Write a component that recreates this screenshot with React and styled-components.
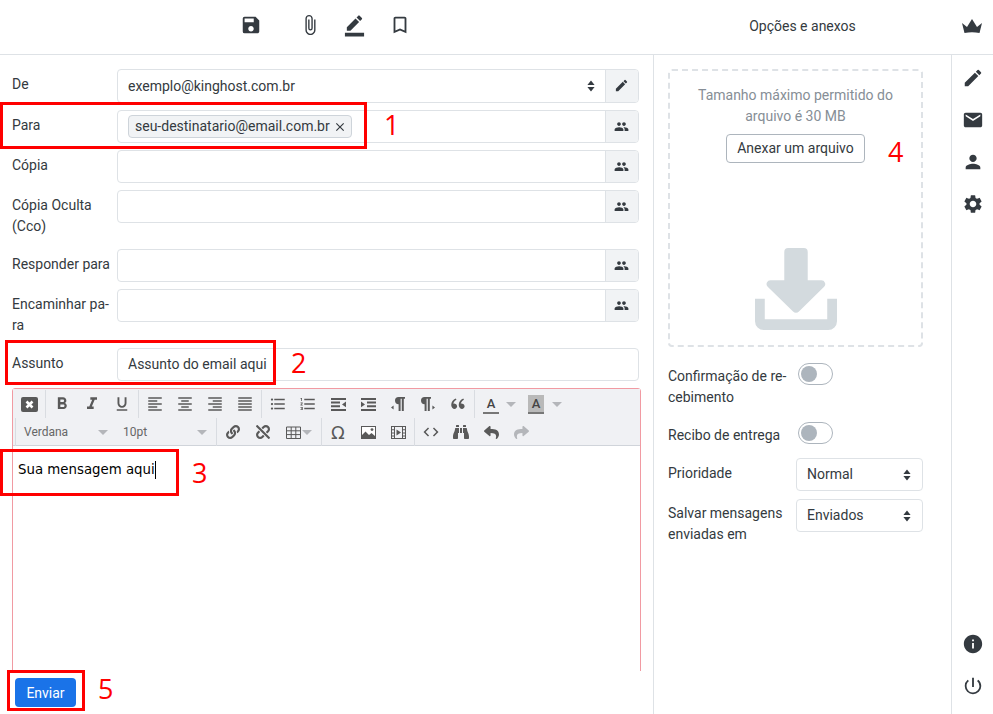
import React from 'react';
import styled, { createGlobalStyle } from 'styled-components';
import { FaBinoculars, FaLink, FaUnlink, FaReply, FaShare } from 'react-icons/fa';
import { RiDoubleQuotesL } from 'react-icons/ri';
import {
    MdSave, MdAttachFile, MdBorderColor, MdBookmarkBorder, MdCreate, MdEmail, MdPerson,
    MdSettings, MdInfo, MdPowerSettingsNew, MdPeople, MdFormatBold, MdFormatItalic,
    MdFormatUnderlined, MdFormatAlignLeft, MdFormatAlignCenter, MdFormatAlignRight,
    MdFormatAlignJustify, MdFormatListBulleted, MdFormatListNumbered, MdCode, MdClose,
} from 'react-icons/md';

const GlobalStyle = createGlobalStyle`
    html, body {
        margin: 0;
        padding: 0;
        background: #fff;
    }
    * {
        box-sizing: border-box;
    }
`;

const Page = styled.div`
    position: relative;
    width: 993px;
    height: 714px;
    overflow: hidden;
    display: flex;
    flex-direction: column;
    font-family: Roboto, "Liberation Sans", sans-serif;
    font-size: 14px;
    line-height: 21px;
    color: #343a40;
`;

const Header = styled.header`
    height: 55px;
    flex: none;
    display: flex;
    border-bottom: 1px solid #dee2e6;
`;

const HeaderTools = styled.div`
    width: 654px;
    padding: 0 0 4px 239px;
    display: flex;
    align-items: center;
    gap: 22px;
    font-size: 22px;
    svg {
        display: block;
    }
`;

const HeaderTool = styled.span`
    width: 23px;
    display: flex;
    justify-content: center;
    margin-left: ${(p) => p.$shift || 0}px;
    font-size: ${(p) => p.$size || 22}px;
`;

const HeaderTitle = styled.div`
    width: 297px;
    text-align: center;
    line-height: 53px;
`;

const HeaderCrown = styled.div`
    width: 42px;
    padding-bottom: 2px;
    display: flex;
    align-items: center;
    justify-content: center;
`;

const Body = styled.div`
    flex: 1;
    min-height: 0;
    display: flex;
`;

const Main = styled.main`
    width: 654px;
    flex: none;
    display: flex;
    flex-direction: column;
    border-right: 1px solid #dee2e6;
`;

const FormScroll = styled.div`
    height: 617px;
    overflow: hidden;
    padding: 14px 14px 0 12px;
`;

const Row = styled.div`
    display: flex;
    margin-bottom: 7px;
`;

const Label = styled.label`
    width: 105px;
    flex: none;
    padding: 5px 0;
    white-space: pre-line;
`;

const InputGroup = styled.div`
    flex: 1;
    height: ${(p) => (p.$tall ? 34 : 33)}px;
    display: flex;
    border: 1px solid #dee2e6;
    border-radius: 4px;
    background: #fff;
`;

const InputValue = styled.div`
    flex: 1;
    padding: 0 10px;
    display: flex;
    align-items: center;
    justify-content: space-between;
    white-space: nowrap;
`;

const Addon = styled.span`
    width: 33px;
    flex: none;
    padding: 0 1px 1px 0;
    display: flex;
    align-items: center;
    justify-content: center;
    background: #f1f3f5;
    border-left: 1px solid #dee2e6;
    border-radius: 0 3px 3px 0;
    font-size: 15px;
`;

const Chip = styled.span`
    height: 23px;
    display: inline-flex;
    align-items: center;
    gap: 3px;
    padding: 0 4px 0 6px;
    background: #f1f3f5;
    border: 1px solid #ced4da;
    border-radius: 4px;
    svg {
        font-size: 14px;
    }
`;

const Editor = styled.div`
    margin-right: -2px;
    height: 300px;
    border: 1px solid #f19aa2;
    border-radius: 3px 3px 0 0;
`;

const EditorToolbar = styled.div`
    height: 57px;
    padding-top: 1px;
    background: #f0f1f4;
    border-bottom: 1px solid #d0d4da;
`;

const ToolbarRow = styled.div`
    height: 28px;
    display: flex;
    align-items: center;
    padding-left: ${(p) => p.$indent || 0}px;
`;

const ToolGroup = styled.div`
    height: 28px;
    display: flex;
    align-items: center;
    padding: 0 1px;
    border-right: ${(p) => (p.$last ? '0' : '1px solid #d9dce1')};
    border-left: ${(p) => (p.$lead ? '1px solid #d9dce1' : '0')};
`;

const Tool = styled.span`
    width: ${(p) => p.$w || 30}px;
    height: 24px;
    display: flex;
    align-items: center;
    justify-content: center;
    color: ${(p) => (p.$muted ? '#b4b6ba' : '#595959')};
    font-size: ${(p) => p.$size || 18}px;
`;

const Caret = styled.span`
    width: 0;
    height: 0;
    margin-right: ${(p) => p.$nudge || 0}px;
    border-left: 5px solid transparent;
    border-right: 5px solid transparent;
    border-top: 5px solid #b4b6ba;
`;

const ColorLetter = styled.span`
    width: 16px;
    height: 19px;
    display: flex;
    justify-content: center;
    background: ${(p) => (p.$marked ? '#b9b9b9' : 'transparent')};
    border-bottom: 2px solid #777;
    font-size: 13px;
    line-height: 18px;
    font-weight: 500;
    color: #444;
`;

const FontPicker = styled.span`
    width: ${(p) => p.$w}px;
    height: 24px;
    padding: 0 8px 0 7px;
    display: flex;
    align-items: center;
    justify-content: space-between;
    font-size: 12px;
    color: #666;
`;

const OmegaGlyph = styled.span`
    font-family: "DejaVu Sans", sans-serif;
    font-size: 18px;
    color: #595959;
`;

const EditorBody = styled.div`
    padding: 14px 5px;
    display: flex;
    align-items: center;
    font-family: "DejaVu Sans", Verdana, sans-serif;
    font-size: 13.33px;
    line-height: 20px;
    color: #000;
`;

const TextCursor = styled.span`
    width: 1px;
    height: 18px;
    background: #000;
`;

const Footer = styled.div`
    flex: 1;
    padding: 7px 15px;
`;

const SendButton = styled.button`
    width: 61px;
    height: 29px;
    padding: 1px 0 0;
    background: #1a73e8;
    color: #fff;
    border: 0;
    border-radius: 4px;
    font: inherit;
`;

const Options = styled.aside`
    width: 297px;
    flex: none;
    padding: 14px 28px 0 14px;
`;

const DropZone = styled.div`
    height: 278px;
    padding-top: 14px;
    display: flex;
    flex-direction: column;
    align-items: center;
    border: 2px dashed #dee2e6;
    border-radius: 4px;
    text-align: center;
    color: #868e96;
`;

const DropHint = styled.div`
    width: 220px;
`;

const AttachButton = styled.button`
    height: 29px;
    margin-top: 7px;
    padding: 0 10.5px;
    background: #fff;
    border: 1px solid #adb5bd;
    border-radius: 4px;
    color: #343a40;
    font: inherit;
`;

const DropIcon = styled.svg`
    width: 82px;
    height: 82px;
    margin-top: 85px;
    display: block;
`;

const OptionRow = styled.div`
    display: flex;
    margin-top: ${(p) => p.$top || 0}px;
    margin-bottom: ${(p) => p.$gap ?? 7}px;
`;

const OptionLabel = styled.div`
    width: 128px;
    flex: none;
    padding-top: ${(p) => p.$pad ?? 5}px;
    padding-right: 4px;
`;

const Toggle = styled.span`
    width: 35px;
    height: 22px;
    margin: 5px 0 0 2px;
    padding: 2px;
    display: block;
    border: 1px solid #adb5bd;
    border-radius: 11px;
    &::before {
        content: '';
        display: block;
        width: 16px;
        height: 16px;
        border-radius: 50%;
        background: #adb5bd;
    }
`;

const SelectBox = styled.div`
    width: 127px;
    height: 33px;
    margin-top: ${(p) => p.$top || 0}px;
    padding: 0 11px 0 10px;
    display: flex;
    align-items: center;
    justify-content: space-between;
    border: 1px solid #dee2e6;
    border-radius: 4px;
`;

const Sidebar = styled.nav`
    width: 42px;
    flex: none;
    display: flex;
    flex-direction: column;
    align-items: center;
    padding: 12px 0 17px;
    font-size: 22px;
    border-left: 1px solid #dee2e6;
    color: #343a40;
`;

const SideIcon = styled.span`
    height: 22px;
    margin-bottom: ${(p) => p.$gap ?? 20}px;
    display: block;
    svg {
        display: block;
    }
`;

const SideSpacer = styled.div`
    flex: 1;
`;

const RedBox = styled.div`
    position: absolute;
    left: ${(p) => p.$x}px;
    top: ${(p) => p.$y}px;
    width: ${(p) => p.$w}px;
    height: ${(p) => p.$h}px;
    border: 3px solid #f00;
`;

const RedNumber = styled.span`
    position: absolute;
    left: ${(p) => p.$x}px;
    top: ${(p) => p.$y}px;
    font-family: "Open Sans", sans-serif;
    font-size: 27px;
    line-height: 32px;
    color: #f00;
`;

const CrownIcon = () => (
    <svg width="20" height="15" viewBox="0 0 20 15">
        <path d="M0 4 5 8 10 0 15 8 20 4 17.5 14Q10 12.5 2.5 14z" fill="#343a40" />
    </svg>
);

const UpDown = () => (
    <svg width="8" height="12" viewBox="0 0 8 12">
        <path d="M4 0.5 7.6 5H0.4zM4 11.5 0.4 7h7.2z" fill="#343a40" />
    </svg>
);

const CloseIcon = () => (
    <svg width="17" height="15" viewBox="0 0 17 15">
        <rect width="17" height="15" rx="2" fill="#595959" />
        <path d="M5.5 4.5 11.5 10.5M11.5 4.5 5.5 10.5" stroke="#fff" strokeWidth="2.6" />
    </svg>
);

const TableIcon = () => (
    <svg width="15" height="13" viewBox="0 0 15 13" fill="none" stroke="#595959">
        <path d="M.5 1h14v11.5H.5zM.5 4.8h14M.5 8.6h14M5.2 1v11.5M9.8 1v11.5" />
    </svg>
);

const OutdentIcon = () => (
    <svg width="15" height="13" viewBox="0 0 15 13" fill="#595959">
        <path d="M0 0h15v2H0zM0 3.6h9v2H0zM0 7.2h9v2H0zM0 11h15v2H0zM15 3.6v5.6L11 6.4z" />
    </svg>
);

const IndentIcon = () => (
    <svg width="15" height="13" viewBox="0 0 15 13" fill="#595959">
        <path d="M0 0h15v2H0zM6 3.6h9v2H6zM6 7.2h9v2H6zM0 11h15v2H0zM0 3.6v5.6l4-2.8z" />
    </svg>
);

const ParaLeftIcon = () => (
    <svg width="14" height="14" viewBox="0 0 14 14" fill="#595959">
        <path d="M7.5 0H14v1.8h-1.2V14h-2V1.8H9.6V14h-2V7.2a3.6 3.6 0 0 1 0-7.2zM0 10.5l2.6-2v4z" />
    </svg>
);

const ParaRightIcon = () => (
    <svg width="14" height="14" viewBox="0 0 14 14" fill="#595959">
        <path d="M3.6 0H10v1.8H8.8V14h-2V1.8H5.6V14h-2V7.2a3.6 3.6 0 0 1 0-7.2zM14 10.5l-2.6-2v4z" />
    </svg>
);

const ImageIcon = () => (
    <svg width="15" height="13" viewBox="0 0 15 13">
        <rect x=".5" y=".5" width="14" height="12" fill="#fff" stroke="#595959" />
        <path d="M1 12V9l3.5-3.5L8 9l2.5-2L14 10v2z" fill="#595959" />
        <circle cx="11" cy="3.6" r="1.4" fill="#595959" />
    </svg>
);

const MediaIcon = () => (
    <svg width="15" height="13" viewBox="0 0 15 13" fill="#595959">
        <path fillRule="evenodd" d="M0 0h15v13H0zM1 1v2.2h2V1zM12 1v2.2h2V1zM1 4.3v2.2h2V4.3zM12 4.3v2.2h2V4.3zM1 7.6v2h2v-2zM12 7.6v2h2v-2zM1 10.6V12h2v-1.4zM12 10.6V12h2v-1.4zM4 1v11h7V1z" />
        <path d="M5.5 3.5 10 6.5l-4.5 3z" />
    </svg>
);

const recipientRows = ['Cópia', 'Cópia Oculta (Cco)', 'Responder para', 'Encaminhar pa-\nra'];

const App = () => {
    return (
        <Page>
            <GlobalStyle />
            <Header>
                <HeaderTools>
                    <HeaderTool><MdSave /></HeaderTool>
                    <HeaderTool $shift={14}><MdAttachFile /></HeaderTool>
                    <HeaderTool $size={24}><MdBorderColor /></HeaderTool>
                    <HeaderTool><MdBookmarkBorder /></HeaderTool>
                </HeaderTools>
                <HeaderTitle>Opções e anexos</HeaderTitle>
                <HeaderCrown><CrownIcon /></HeaderCrown>
            </Header>
            <Body>
                <Main>
                    <FormScroll>
                        <Row>
                            <Label>De</Label>
                            <InputGroup $tall>
                                <InputValue>exemplo@kinghost.com.br <UpDown /></InputValue>
                                <Addon><MdCreate /></Addon>
                            </InputGroup>
                        </Row>
                        <Row>
                            <Label>Para</Label>
                            <InputGroup>
                                <InputValue>
                                    <Chip>seu-destinatario@email.com.br <MdClose /></Chip>
                                </InputValue>
                                <Addon><MdPeople /></Addon>
                            </InputGroup>
                        </Row>
                        {recipientRows.map((label) => (
                            <Row key={label}>
                                <Label>{label}</Label>
                                <InputGroup>
                                    <InputValue />
                                    <Addon><MdPeople /></Addon>
                                </InputGroup>
                            </Row>
                        ))}
                        <Row>
                            <Label>Assunto</Label>
                            <InputGroup>
                                <InputValue>Assunto do email aqui</InputValue>
                            </InputGroup>
                        </Row>
                        <Editor>
                            <EditorToolbar>
                                <ToolbarRow>
                                    <ToolGroup>
                                        <Tool><CloseIcon /></Tool>
                                    </ToolGroup>
                                    <ToolGroup>
                                        <Tool $size={20}><MdFormatBold /></Tool>
                                        <Tool $size={20}><MdFormatItalic /></Tool>
                                        <Tool><MdFormatUnderlined /></Tool>
                                    </ToolGroup>
                                    <ToolGroup>
                                        <Tool><MdFormatAlignLeft /></Tool>
                                        <Tool><MdFormatAlignCenter /></Tool>
                                        <Tool><MdFormatAlignRight /></Tool>
                                        <Tool><MdFormatAlignJustify /></Tool>
                                    </ToolGroup>
                                    <ToolGroup>
                                        <Tool><MdFormatListBulleted /></Tool>
                                        <Tool><MdFormatListNumbered /></Tool>
                                        <Tool><OutdentIcon /></Tool>
                                        <Tool><IndentIcon /></Tool>
                                        <Tool><ParaLeftIcon /></Tool>
                                        <Tool><ParaRightIcon /></Tool>
                                        <Tool><RiDoubleQuotesL /></Tool>
                                    </ToolGroup>
                                    <ToolGroup $last>
                                        <Tool><ColorLetter>A</ColorLetter></Tool>
                                        <Tool $w={15}><Caret $nudge={5} /></Tool>
                                        <Tool><ColorLetter $marked>A</ColorLetter></Tool>
                                        <Tool $w={15}><Caret $nudge={4} /></Tool>
                                    </ToolGroup>
                                </ToolbarRow>
                                <ToolbarRow $indent={2}>
                                    <ToolGroup $lead>
                                        <FontPicker $w={99}>Verdana <Caret /></FontPicker>
                                        <FontPicker $w={99}>10pt <Caret /></FontPicker>
                                    </ToolGroup>
                                    <ToolGroup>
                                        <Tool $size={14}><FaLink /></Tool>
                                        <Tool $size={14}><FaUnlink /></Tool>
                                        <Tool><TableIcon /></Tool>
                                        <Tool $w={12}><Caret $nudge={14} /></Tool>
                                    </ToolGroup>
                                    <ToolGroup>
                                        <Tool><OmegaGlyph>Ω</OmegaGlyph></Tool>
                                        <Tool><ImageIcon /></Tool>
                                        <Tool><MediaIcon /></Tool>
                                    </ToolGroup>
                                    <ToolGroup $last>
                                        <Tool><MdCode /></Tool>
                                        <Tool $size={16}><FaBinoculars /></Tool>
                                        <Tool $size={15}><FaReply /></Tool>
                                        <Tool $size={15} $muted><FaShare /></Tool>
                                    </ToolGroup>
                                </ToolbarRow>
                            </EditorToolbar>
                            <EditorBody>Sua mensagem aqui<TextCursor /></EditorBody>
                        </Editor>
                    </FormScroll>
                    <Footer>
                        <SendButton>Enviar</SendButton>
                    </Footer>
                </Main>
                <Options>
                    <DropZone>
                        <DropHint>Tamanho máximo permitido do arquivo é 30 MB</DropHint>
                        <AttachButton>Anexar um arquivo</AttachButton>
                        <DropIcon viewBox="0 0 84 84" fill="#d3dade">
                            <path d="M34 0h16a4 4 0 0 1 4 4v29h14a4 4 0 0 1 2.8 6.8L45 65a4 4 0 0 1-6 0L13 39.8A4 4 0 0 1 16 33h14V4a4 4 0 0 1 4-4z" />
                            <path d="M0 52h10v21h64V52h10v23a9 9 0 0 1-9 9H9a9 9 0 0 1-9-9z" />
                        </DropIcon>
                    </DropZone>
                    <OptionRow $top={11} $gap={9}>
                        <OptionLabel $pad={8}>Confirmação de re-cebimento</OptionLabel>
                        <Toggle />
                    </OptionRow>
                    <OptionRow $gap={12}>
                        <OptionLabel $pad={8}>Recibo de entrega</OptionLabel>
                        <Toggle />
                    </OptionRow>
                    <OptionRow>
                        <OptionLabel>Prioridade</OptionLabel>
                        <SelectBox>Normal <UpDown /></SelectBox>
                    </OptionRow>
                    <OptionRow>
                        <OptionLabel>Salvar mensagens enviadas em</OptionLabel>
                        <SelectBox $top={1}>Enviados <UpDown /></SelectBox>
                    </OptionRow>
                </Options>
                <Sidebar>
                    <SideIcon><MdCreate /></SideIcon>
                    <SideIcon><MdEmail /></SideIcon>
                    <SideIcon><MdPerson /></SideIcon>
                    <SideIcon><MdSettings /></SideIcon>
                    <SideSpacer />
                    <SideIcon><MdInfo /></SideIcon>
                    <SideIcon $gap={0}><MdPowerSettingsNew /></SideIcon>
                </Sidebar>
            </Body>
            <RedBox $x={0} $y={102} $w={367} $h={47} />
            <RedNumber $x={384} $y={109}>1</RedNumber>
            <RedBox $x={5} $y={340} $w={271} $h={45} />
            <RedNumber $x={291} $y={347}>2</RedNumber>
            <RedBox $x={0} $y={449} $w={179} $h={47} />
            <RedNumber $x={192} $y={457}>3</RedNumber>
            <RedNumber $x={888} $y={136}>4</RedNumber>
            <RedBox $x={7} $y={670} $w={78} $h={41} />
            <RedNumber $x={98} $y={673}>5</RedNumber>
        </Page>
    );
};

export default App;
